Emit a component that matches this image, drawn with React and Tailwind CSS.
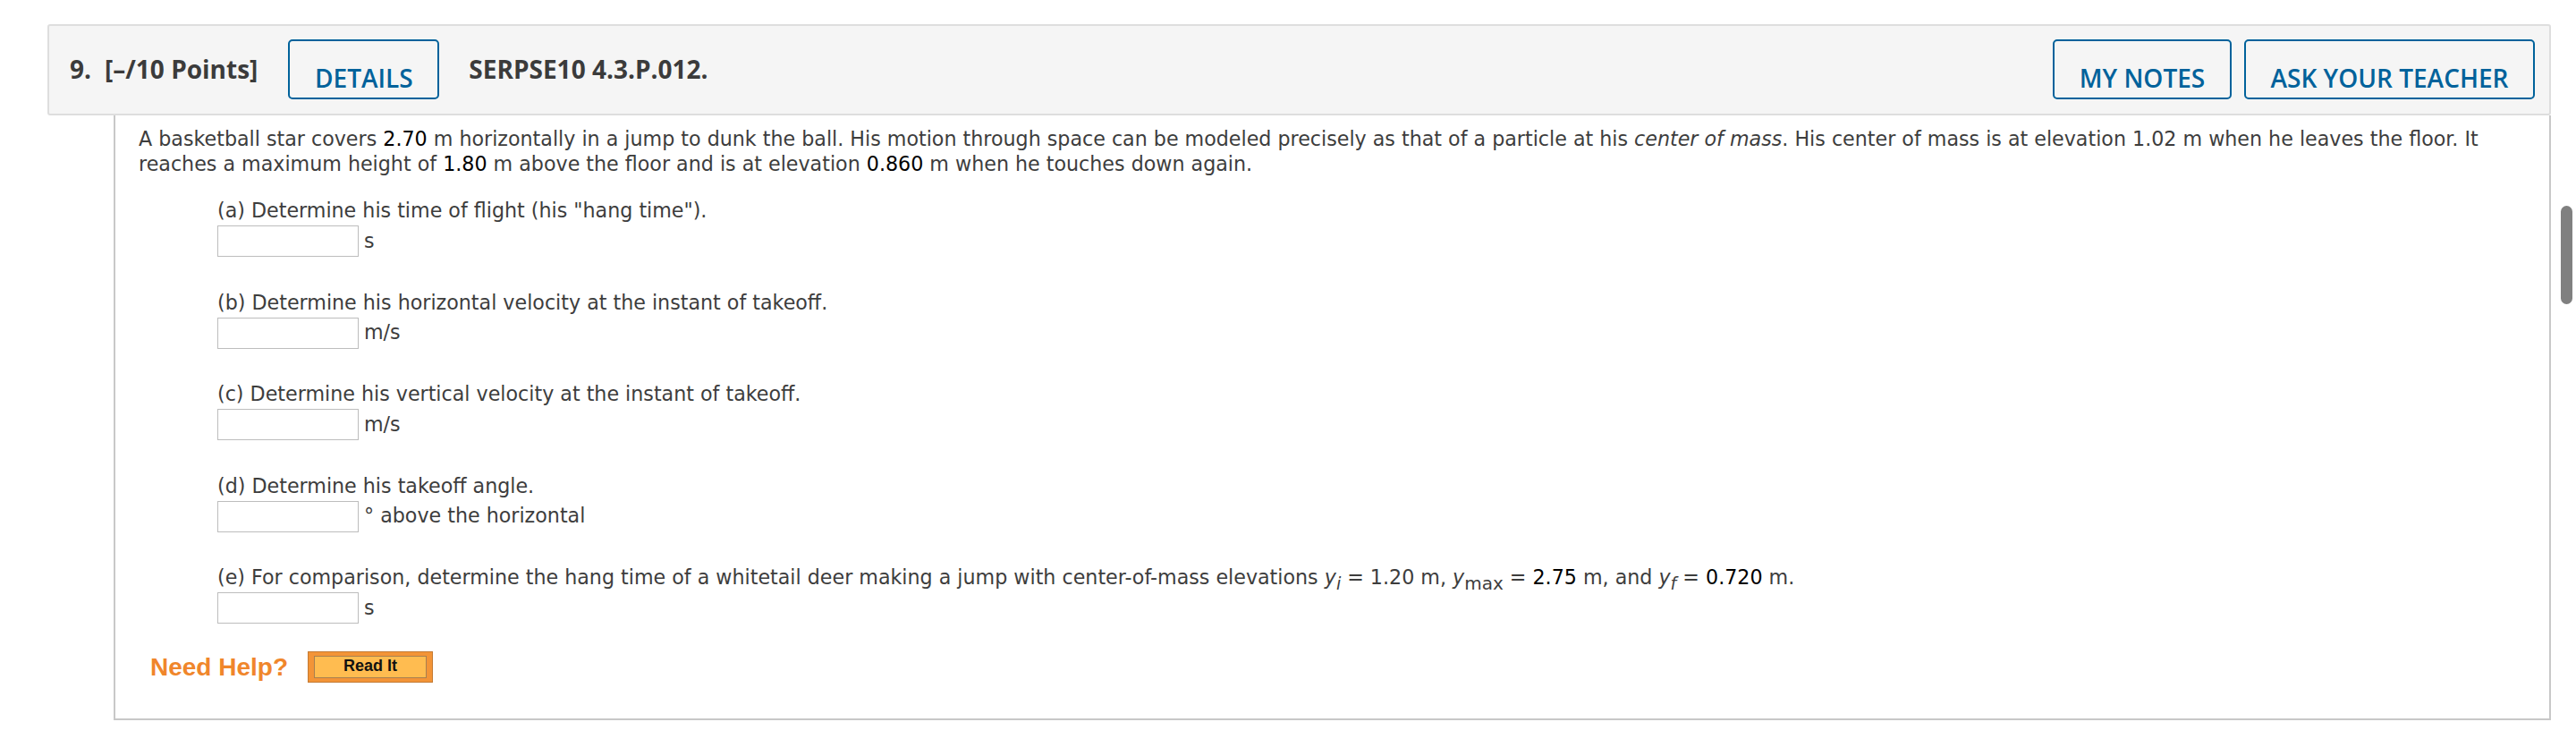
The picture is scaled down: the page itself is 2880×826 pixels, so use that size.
import React from "react";

const Val = ({ children }) => <span className="text-black">{children}</span>;

function NavButton({ className = "", children }) {
  return (
    <button
      className={
        "flex h-[67px] shrink-0 items-start justify-center rounded-[5px] border-2 border-[#00629b] pt-[22px] font-semibold whitespace-nowrap text-[#00629b] " +
        className
      }
    >
      {children}
    </button>
  );
}

function Part({ question, unit }) {
  return (
    <div>
      <div>{question}</div>
      <div className="mt-[2.5px] flex items-center">
        <input
          type="text"
          className="h-[35px] w-[158px] border border-[#bdbdbd] bg-white px-2 outline-none"
        />
        <span className="ml-[6px]">{unit}</span>
      </div>
    </div>
  );
}

const parts = [
  { question: '(a) Determine his time of flight (his "hang time").', unit: "s" },
  { question: "(b) Determine his horizontal velocity at the instant of takeoff.", unit: "m/s" },
  { question: "(c) Determine his vertical velocity at the instant of takeoff.", unit: "m/s" },
  { question: "(d) Determine his takeoff angle.", unit: "° above the horizontal" },
  {
    question: (
      <>
        (e) For comparison, determine the hang time of a whitetail deer making a jump with
        center-of-mass elevations <i>y</i>
        <sub className="-bottom-1.5 text-[19px]">
          <i>i</i>
        </sub>{" "}
        = 1.20 m, <i>y</i>
        <sub className="-bottom-1.5 text-[20px]">max</sub> = <Val>2.75</Val> m, and <i>y</i>
        <sub className="-bottom-1.5 text-[19px]">
          <i>f</i>
        </sub>{" "}
        = <Val>0.720</Val> m.
      </>
    ),
    unit: "s",
  },
];

export default function App() {
  return (
    <div className="relative min-h-[826px] w-full bg-white pt-[27px] pr-[28px] pl-[53px]">
      {/* question header */}
      <div className="flex items-start rounded-[3px] border-2 border-[#dedede] bg-[#f5f5f5] pt-[15px] pr-[16px] pb-[16px] pl-[23px] font-['Open_Sans',sans-serif] text-[28px] leading-[38px]">
        <h2 className="mt-[14px] font-bold whitespace-nowrap text-[#3b3b3b]">
          9.<span className="ml-[15px]">[–/10 Points]</span>
        </h2>
        <NavButton className="ml-[34px] w-[169px]">DETAILS</NavButton>
        <span className="mt-[14px] ml-[33px] font-bold whitespace-nowrap text-[#3b3b3b]">
          SERPSE10 4.3.P.012.
        </span>
        <div className="ml-auto flex gap-[14px]">
          <NavButton className="w-[200px]">MY NOTES</NavButton>
          <NavButton className="w-[325px]">ASK YOUR TEACHER</NavButton>
        </div>
      </div>

      {/* question body */}
      <div className="ml-[74px] border-2 border-t-0 border-[#c8c8c8] pt-[13px] pr-[26px] pb-[40px] pl-[26px] font-['DejaVu_Sans',Verdana,sans-serif] text-[22.2px] leading-[27.5px] text-[#3d3d3d]">
        <p>
          A basketball star covers <Val>2.70</Val> m horizontally in a jump to dunk the ball. His
          motion through space can be modeled precisely as that of a particle at his{" "}
          <i>center of mass</i>. His center of mass is at elevation 1.02 m when he leaves the
          floor. It reaches a maximum height of <Val>1.80</Val> m above the floor and is at
          elevation <Val>0.860</Val> m when he touches down again.
        </p>

        <div className="mt-[25px] ml-[88px] flex flex-col gap-[37.5px]">
          {parts.map((p, i) => (
            <Part key={i} question={p.question} unit={p.unit} />
          ))}
        </div>

        <div className="mt-[30.5px] ml-[13px] flex items-center gap-[22px]">
          <span className="font-['Liberation_Sans',Arial,sans-serif] text-[28px] leading-[35px] font-bold text-[#f0862b]">
            Need Help?
          </span>
          <button className="flex h-[35px] w-[140px] border border-[#c47a33] bg-[#f39437] px-[6px] py-[4px]">
            <span className="flex h-full w-full items-center justify-center border border-[#a88050] bg-[#ffbc50] font-['Liberation_Sans',Arial,sans-serif] text-[18px] font-bold text-[#111]">
              Read It
            </span>
          </button>
        </div>
      </div>

      {/* overlay scrollbar */}
      <div className="absolute top-[230px] right-[4px] h-[110px] w-[13px] rounded-full bg-[#808080]" />
    </div>
  );
}
